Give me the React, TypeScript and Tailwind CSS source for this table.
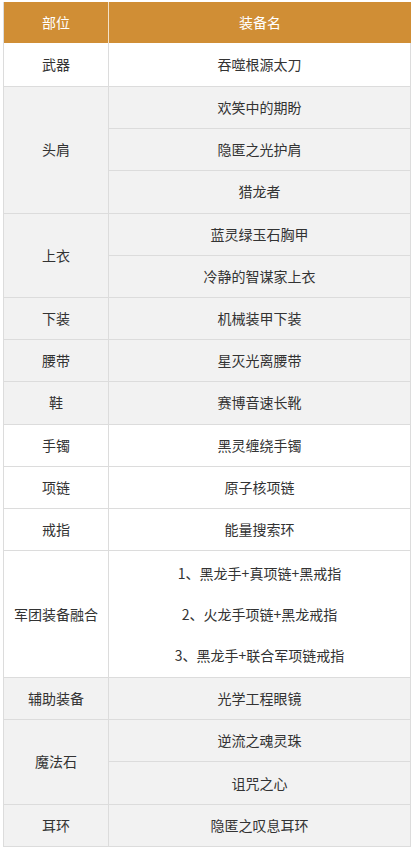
const rows: { part: string; items: string[]; gray: boolean; first?: boolean; merged?: boolean }[] = [
  { part: "武器", items: ["吞噬根源太刀"], gray: false, first: true },
  { part: "头肩", items: ["欢笑中的期盼", "隐匿之光护肩", "猎龙者"], gray: true },
  { part: "上衣", items: ["蓝灵绿玉石胸甲", "冷静的智谋家上衣"], gray: true },
  { part: "下装", items: ["机械装甲下装"], gray: true },
  { part: "腰带", items: ["星灭光离腰带"], gray: true },
  { part: "鞋", items: ["赛博音速长靴"], gray: true },
  { part: "手镯", items: ["黑灵缠绕手镯"], gray: false },
  { part: "项链", items: ["原子核项链"], gray: false },
  { part: "戒指", items: ["能量搜索环"], gray: false },
  {
    part: "军团装备融合",
    items: ["1、黑龙手+真项链+黑戒指", "2、火龙手项链+黑龙戒指", "3、黑龙手+联合军项链戒指"],
    gray: false,
    merged: true,
  },
  { part: "辅助装备", items: ["光学工程眼镜"], gray: true },
  { part: "魔法石", items: ["逆流之魂灵珠", "诅咒之心"], gray: true },
  { part: "耳环", items: ["隐匿之叹息耳环"], gray: true },
];

export default function App() {
  return (
    <div
      className="w-[417px] h-[853px] bg-white pt-[2px] pl-[3px] text-[14px] text-[#333]"
      style={{ fontFamily: '"Noto Sans CJK SC", "Microsoft YaHei", sans-serif' }}
    >
      <div className="w-[408px] border-l border-[#dcdcdc]">
        {/* header */}
        <div className="flex h-[41px] bg-[#d08e35] text-white">
          <div className="w-[105px] flex items-center justify-center border-r border-[#f3e2c8]">部位</div>
          <div className="flex-1 flex items-center justify-center">装备名</div>
        </div>

        {rows.map((r) => (
          <div
            key={r.part}
            className={`flex border-b border-r border-[#dcdcdc] ${r.gray ? "bg-[#f2f2f2]" : "bg-white"}`}
          >
            <div className="w-[105px] shrink-0 flex items-center justify-center border-r border-[#dcdcdc]">
              {r.part}
            </div>
            <div className="flex-1 flex flex-col">
              {r.merged ? (
                <div className="h-[126px] flex flex-col justify-center">
                  {r.items.map((it) => (
                    <div key={it} className="h-[41px] flex items-center justify-center">
                      {it}
                    </div>
                  ))}
                </div>
              ) : (
                r.items.map((it, i) => (
                  <div
                    key={it}
                    className={`flex items-center justify-center ${r.first ? "h-[43px]" : i < r.items.length - 1 ? "h-[42.2px] border-b border-[#dcdcdc]" : "h-[41.2px]"}`}
                  >
                    {it}
                  </div>
                ))
              )}
            </div>
          </div>
        ))}
      </div>
    </div>
  );
}
